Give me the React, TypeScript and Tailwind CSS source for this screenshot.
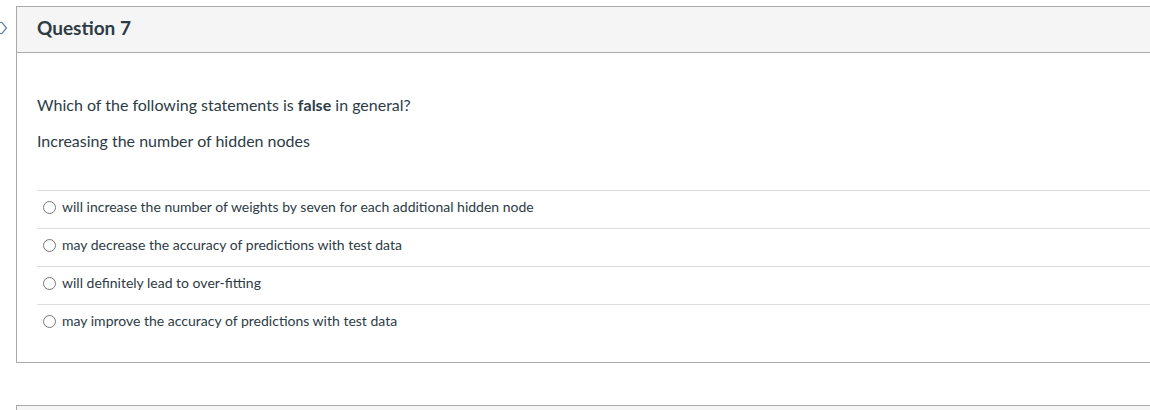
import React from "react";

const answers = [
  "will increase the number of weights by seven for each additional hidden node",
  "may decrease the accuracy of predictions with test data",
  "will definitely lead to over-fitting",
  "may improve the accuracy of predictions with test data",
];

export default function App() {
  return (
    <div className="relative w-[1150px] h-[410px] overflow-hidden bg-white text-[#2d3b45]" style={{ fontFamily: "Lato, 'Open Sans', sans-serif" }}>
      <svg className="absolute left-[-6px] top-[21px]" width="14" height="14" viewBox="0 0 14 14">
        <path d="M1 1.5 H8 L12.5 7 L8 12.5 H1" fill="none" stroke="#5b7ea3" strokeWidth="1.2" />
      </svg>
      <div className="ml-4 mt-[6px] border border-r-0 border-[#aaaaaa]">
        <div className="h-[46px] bg-[#f5f5f5] border-b border-[#aaaaaa] flex items-center pl-5 pb-[2px]">
          <span className="text-[19px] font-bold text-[#2d3b45]">Question 7</span>
        </div>
        <div className="pl-5 pt-[42px] pb-[20px]">
          <p className="text-[16px] leading-[20px] text-[#2d3b45]">
            Which of the following statements is <strong className="font-bold">false</strong> in general?
          </p>
          <p className="text-[16px] leading-[20px] mt-4 text-[#2d3b45]">Increasing the number of hidden nodes</p>
          <div className="mt-[39px]">
            {answers.map((a) => (
              <div key={a} className="h-[38px] border-t border-[#dddddd] flex items-center pl-[6px] pb-[5px]">
                <span className="w-[13px] h-[13px] rounded-full border border-[#777777] bg-white mr-[6px]" />
                <span className="text-[14px] leading-[20px] text-[#2d3b45]">{a}</span>
              </div>
            ))}
          </div>
        </div>
      </div>
      <div className="ml-4 mt-[42px] h-[20px] border border-r-0 border-[#aaaaaa] bg-[#f5f5f5]" />
    </div>
  );
}
